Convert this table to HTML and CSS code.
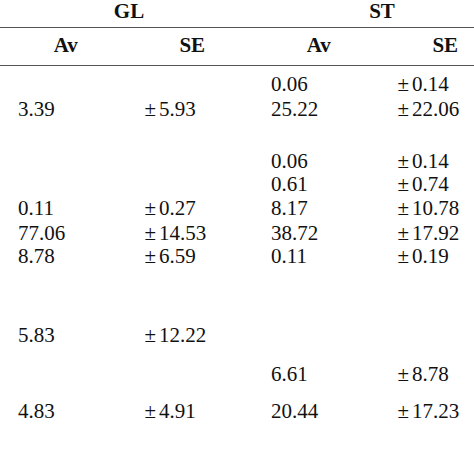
FILE: index.html
```html
<!DOCTYPE html>
<html>
<head>
<meta charset="utf-8">
<link rel="stylesheet" href="styles.css">
</head>
<body>
<div class="table">
  <div class="head1">
    <div>GL</div>
    <div class="last">ST</div>
  </div>
  <div class="head2">
    <div>Av</div><div>SE</div><div>Av</div><div class="last">SE</div>
  </div>
  <div class="body">
    <div class="row h25"><div></div><div></div><div>0.06</div><div><span class="pm">±</span>0.14</div></div>
    <div class="row h26"><div>3.39</div><div><span class="pm">±</span>5.93</div><div>25.22</div><div><span class="pm">±</span>22.06</div></div>
    <div class="row h26"></div>
    <div class="row h23"><div></div><div></div><div>0.06</div><div><span class="pm">±</span>0.14</div></div>
    <div class="row h24"><div></div><div></div><div>0.61</div><div><span class="pm">±</span>0.74</div></div>
    <div class="row h25"><div>0.11</div><div><span class="pm">±</span>0.27</div><div>8.17</div><div><span class="pm">±</span>10.78</div></div>
    <div class="row h23"><div>77.06</div><div><span class="pm">±</span>14.53</div><div>38.72</div><div><span class="pm">±</span>17.92</div></div>
    <div class="row h26"><div>8.78</div><div><span class="pm">±</span>6.59</div><div>0.11</div><div><span class="pm">±</span>0.19</div></div>
    <div class="row h26"></div>
    <div class="row h27"></div>
    <div class="row h39"><div>5.83</div><div><span class="pm">±</span>12.22</div><div></div><div></div></div>
    <div class="row h37"><div></div><div></div><div>6.61</div><div><span class="pm">±</span>8.78</div></div>
    <div class="row h24"><div>4.83</div><div><span class="pm">±</span>4.91</div><div>20.44</div><div><span class="pm">±</span>17.23</div></div>
  </div>
</div>
</body>
</html>
```
FILE: styles.css
```css
html, body {
  margin: 0;
  padding: 0;
  background: #ffffff;
}
body {
  width: 474px;
  height: 474px;
  overflow: hidden;
  font-family: "Liberation Serif", "Times New Roman", serif;
  font-size: 21px;
  color: #111111;
}
.table {
  width: 474px;
}
.head1 {
  display: grid;
  grid-template-columns: 253px 1fr;
  padding-left: 2.5px;
  height: 27px;
  line-height: 23px;
  font-weight: bold;
  border-bottom: 1px solid #555555;
  text-align: center;
}
.head2 {
  display: grid;
  grid-template-columns: repeat(3, 126.5px) 1fr;
  padding-left: 2.5px;
  padding-top: 5px;
  height: 32px;
  line-height: 24px;
  font-weight: bold;
  text-align: center;
  border-bottom: 1px solid #555555;
}
.last {
  padding-left: 34.5px;
}
.body {
  padding-top: 6px;
}
.row {
  display: grid;
  grid-template-columns: repeat(3, 126.5px) 1fr;
  padding-left: 2.5px;
  line-height: 24px;
}
.row > div {
  padding-left: 15.5px;
  white-space: nowrap;
}
.pm {
  margin-right: 3px;
}
.h23 { height: 23px; }
.h24 { height: 24px; }
.h25 { height: 25px; }
.h26 { height: 26px; }
.h27 { height: 27px; }
.h37 { height: 37px; }
.h39 { height: 39px; }
```
